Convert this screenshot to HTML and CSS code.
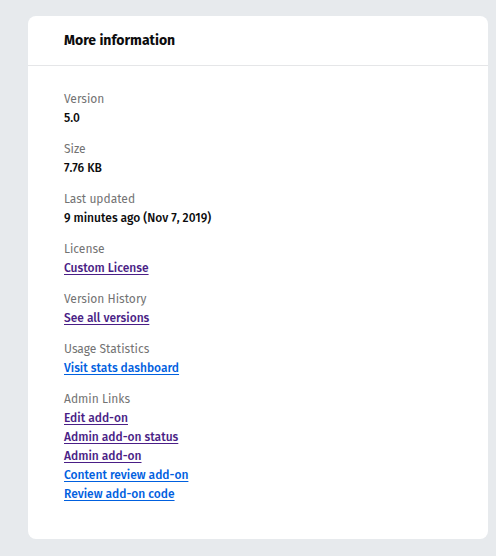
FILE: index.html
```html
<!DOCTYPE html>
<html lang="en">
<head>
<meta charset="utf-8">
<title>More information</title>
<link rel="stylesheet" href="styles.css">
</head>
<body>
<section class="card">
  <header class="card-header">
    <h2 class="card-title">More information</h2>
  </header>
  <dl class="card-body">
    <div class="group">
      <dt class="label">Version</dt>
      <dd class="value">5.0</dd>
    </div>
    <div class="group">
      <dt class="label">Size</dt>
      <dd class="value">7.76 KB</dd>
    </div>
    <div class="group">
      <dt class="label">Last updated</dt>
      <dd class="value">9 minutes ago (Nov 7, 2019)</dd>
    </div>
    <div class="group">
      <dt class="label">License</dt>
      <dd class="value"><a class="link visited" href="#">Custom License</a></dd>
    </div>
    <div class="group">
      <dt class="label">Version History</dt>
      <dd class="value"><a class="link visited" href="#">See all versions</a></dd>
    </div>
    <div class="group">
      <dt class="label">Usage Statistics</dt>
      <dd class="value"><a class="link" href="#">Visit stats dashboard</a></dd>
    </div>
    <div class="group last">
      <dt class="label">Admin Links</dt>
      <dd class="value"><a class="link visited" href="#">Edit add-on</a></dd>
      <dd class="value"><a class="link visited" href="#">Admin add-on status</a></dd>
      <dd class="value"><a class="link visited" href="#">Admin add-on</a></dd>
      <dd class="value"><a class="link" href="#">Content review add-on</a></dd>
      <dd class="value"><a class="link" href="#">Review add-on code</a></dd>
    </div>
  </dl>
</section>
</body>
</html>
```
FILE: styles.css
```css
html, body {
  margin: 0;
  padding: 0;
}
body {
  background: #e7eaed;
  font-family: "Fira Sans", Roboto, "Liberation Sans", sans-serif;
  color: #0c0c0d;
  padding: 16px 8px 16px 28px;
}
.card {
  background: #ffffff;
  border-radius: 8px;
  width: 460px;
  overflow: hidden;
}
.card-header {
  height: 49px;
  border-bottom: 1px solid #e5e6e8;
  display: flex;
  align-items: center;
  padding: 0 36px;
}
.card-title {
  margin: 0;
  font-size: 14px;
  font-weight: 700;
  color: #0c0c0d;
}
.card-body {
  margin: 0;
  padding: 24px 36px 35px 36px;
}
.group {
  margin-bottom: 12px;
}
.group.last {
  margin-bottom: 0;
}
.label {
  font-size: 12px;
  line-height: 19px;
  color: #737373;
}
.value {
  margin: 0;
  font-size: 12px;
  line-height: 19px;
  font-weight: 500;
  color: #0c0c0d;
}
.link {
  color: #0060df;
  text-decoration: underline;
  text-underline-offset: 2px;
}
.link.visited {
  color: #4a1e86;
}
```
